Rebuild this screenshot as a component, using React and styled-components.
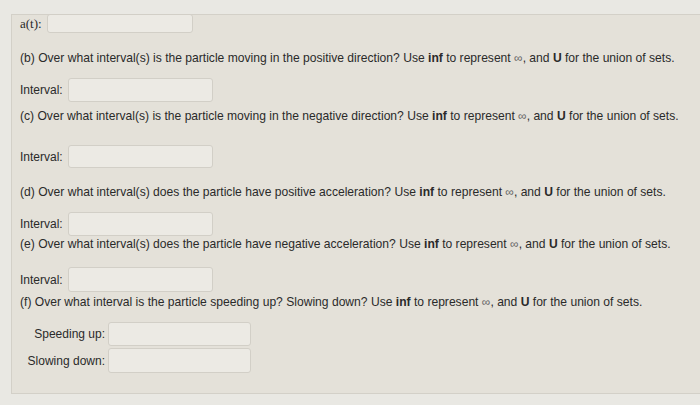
import React from "react";
import styled, { createGlobalStyle } from "styled-components";

const GlobalStyle = createGlobalStyle`
  html, body {
    margin: 0;
    padding: 0;
    background: #e9e8e3;
  }
  body {
    font-family: "Liberation Sans", Arial, sans-serif;
    color: #2a2a2a;
    overflow: hidden;
  }
`;

const Page = styled.div`
  width: 700px;
  height: 405px;
  padding-top: 14px;
  box-sizing: border-box;
`;

const Panel = styled.div`
  margin-left: 11px;
  height: 380px;
  box-sizing: border-box;
  background: #e4e1d9;
  border: 1px solid #d3d0c8;
  border-right: none;
  padding-left: 8px;
`;

const Row = styled.div`
  display: flex;
  align-items: center;
  margin-top: ${({ $top }) => $top}px;
`;

const Label = styled.span`
  font-size: 12px;
  width: ${({ $w }) => ($w ? `${$w}px` : "auto")};
  text-align: ${({ $right }) => ($right ? "right" : "left")};
  box-sizing: border-box;
  padding-right: 3px;
`;

const SerifLabel = styled(Label)`
  font-family: "Liberation Serif", "Times New Roman", serif;
  font-size: 13px;
  width: 27px;
`;

const Input = styled.div`
  width: ${({ $w }) => $w}px;
  height: ${({ $h }) => $h}px;
  box-sizing: border-box;
  background: #eceae4;
  border: 1px solid #d2cfc7;
  border-radius: 3px;
`;

const Question = styled.p`
  margin: ${({ $top }) => $top}px 0 0;
  font-size: 12.1px;
  line-height: 14px;
  white-space: nowrap;
`;

const Inf = styled.span`
  font-size: 12px;
  color: #666;
`;

const Tail = () => (
  <>
    {" "}Use <b>inf</b> to represent <Inf>∞</Inf>, and <b>U</b> for the union of sets.
  </>
);

export default function App() {
  return (
    <Page>
      <GlobalStyle />
      <Panel>
        <Row $top={-1}>
          <SerifLabel>a(t):</SerifLabel>
          <Input $w={146} $h={19} />
        </Row>
        <Question $top={18}>
          (b) Over what interval(s) is the particle moving in the positive direction?
          <Tail />
        </Question>
        <Row $top={13}>
          <Label $w={48}>Interval:</Label>
          <Input $w={145} $h={24} />
        </Row>
        <Question $top={7}>
          (c) Over what interval(s) is the particle moving in the negative direction?
          <Tail />
        </Question>
        <Row $top={22}>
          <Label $w={48}>Interval:</Label>
          <Input $w={145} $h={23} />
        </Row>
        <Question $top={17}>
          (d) Over what interval(s) does the particle have positive acceleration?
          <Tail />
        </Question>
        <Row $top={13}>
          <Label $w={48}>Interval:</Label>
          <Input $w={145} $h={24} />
        </Row>
        <Question $top={1}>
          (e) Over what interval(s) does the particle have negative acceleration?
          <Tail />
        </Question>
        <Row $top={16}>
          <Label $w={48}>Interval:</Label>
          <Input $w={145} $h={25} />
        </Row>
        <Question $top={3}>
          (f) Over what interval is the particle speeding up? Slowing down?
          <Tail />
        </Question>
        <Row $top={13}>
          <Label $w={88} $right>Speeding up:</Label>
          <Input $w={143} $h={24} />
        </Row>
        <Row $top={2}>
          <Label $w={88} $right>Slowing down:</Label>
          <Input $w={143} $h={25} />
        </Row>
      </Panel>
    </Page>
  );
}
